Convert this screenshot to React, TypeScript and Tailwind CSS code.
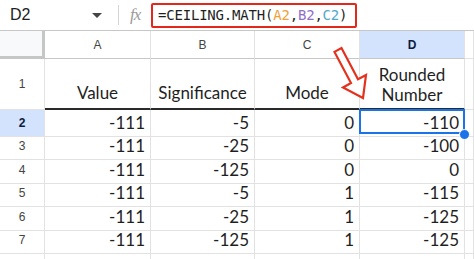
import React from "react";

const cols = ["A", "B", "C", "D"];

const rows = [
  ["-111", "-5", "0", "-110"],
  ["-111", "-25", "0", "-100"],
  ["-111", "-125", "0", "0"],
  ["-111", "-5", "1", "-115"],
  ["-111", "-25", "1", "-125"],
  ["-111", "-125", "1", "-125"],
];

const rowHeights = ["h-[23px]", "h-[24px]", "h-[23px]", "h-[24px]", "h-[23px]", "h-[24px]"];

const grid = "grid grid-cols-[45px_106px_104px_105px_105px_1fr]";
const cell = "border-r border-b border-[#e2e2e2]";

const Arrow = () => (
  <svg className="absolute left-0 top-0 pointer-events-none" width="474" height="259">
    <polygon
      points="341.5,48.1 358,79.2 366,75 363,98 343,87.5 351,83 334.5,51.9"
      fill="white"
      stroke="#e3321f"
      strokeWidth="2.2"
      strokeLinejoin="miter"
    />
  </svg>
);

export default function App() {
  return (
    <div className="relative w-[474px] h-[259px] overflow-hidden bg-white font-['Lato',sans-serif] text-[#1f1f1f]">
      {/* formula bar */}
      <div className="flex items-center h-[31px] border-b border-[#c7c7c7]">
        <div className="w-[90px] pl-[10px] text-[16px] font-['Liberation_Sans',sans-serif] text-[#202124]">D2</div>
        <div className="w-0 h-0 border-l-[5px] border-r-[5px] border-t-[5px] border-l-transparent border-r-transparent border-t-[#444] ml-[2px]" />
        <div className="w-px h-[20px] bg-[#d5d5d5] ml-[16px]" />
        <div className="ml-[11px] w-[18px] text-[17px] italic font-['Liberation_Serif',serif] text-[#9a9a9a] tracking-[-1px]">fx</div>
        <div className="ml-[3px] h-[25px] w-[206px] border-2 border-[#e3271b] rounded-[2px] flex items-center pl-[5px] text-[14px] tracking-[-0.2px] font-['DejaVu_Sans_Mono',monospace] text-[#1f1f1f]">
          =CEILING.MATH(<span className="text-[#f0a13a]">A2</span>,<span className="text-[#9170c9]">B2</span>,<span className="text-[#53a8c9]">C2</span>)
        </div>
      </div>

      {/* column headers */}
      <div className={`${grid} h-[28px] text-[12px] font-['Liberation_Sans',sans-serif] text-[#444]`}>
        <div className="bg-[#f8f9fa] border-r-[3px] border-b-[3px] border-[#c4c7c5]" />
        {cols.map((c) => (
          <div
            key={c}
            className={`flex items-center justify-center ${cell} border-b-[#c7c7c7] ${
              c === "D" ? "bg-[#d3e3fd] font-bold text-[#0b1b3f]" : ""
            }`}
          >
            {c}
          </div>
        ))}
        <div className={cell} />
      </div>

      {/* row 1 */}
      <div className={`${grid} h-[51px] text-[17px]`}>
        <div className={`flex items-center justify-center text-[12px] font-['Liberation_Sans',sans-serif] text-[#444] ${cell}`}>1</div>
        <div className="flex items-end justify-center pb-[3px] border-r border-[#e2e2e2] border-b-2 border-b-[#2a2a2a]">Value</div>
        <div className="flex items-end justify-center pb-[3px] border-r border-[#e2e2e2] border-b-2 border-b-[#2a2a2a]">Significance</div>
        <div className="flex items-end justify-center pb-[3px] border-r border-[#e2e2e2] border-b-2 border-b-[#2a2a2a]">Mode</div>
        <div className="flex items-end justify-center text-center leading-[20px] pb-[3px] border-r border-[#e2e2e2] border-b-2 border-b-[#2a2a2a]">
          Rounded
          <br />
          Number
        </div>
        <div className={cell} />
      </div>

      {/* data rows */}
      {rows.map((r, i) => (
        <div key={i} className={`${grid} ${rowHeights[i]} text-[17px]`}>
          <div
            className={`flex items-center justify-center text-[12px] font-['Liberation_Sans',sans-serif] ${cell} ${
              i === 0 ? "bg-[#d3e3fd] font-bold text-[#0b1b3f]" : "text-[#444]"
            }`}
          >
            {i + 2}
          </div>
          {r.map((v, j) => (
            <div key={j} className={`flex items-center justify-end pr-[5px] ${cell}`}>
              {v}
            </div>
          ))}
          <div className={cell} />
        </div>
      ))}
      <div className={`${grid} h-[10px]`}>
        <div className={cell} />
        <div className={cell} />
        <div className={cell} />
        <div className={cell} />
        <div className={cell} />
        <div className={cell} />
      </div>

      {/* selection on D2 */}
      <div className="absolute left-[359px] top-[109px] w-[106px] h-[25px] border-2 border-[#1a73e8] pointer-events-none" />
      <div className="absolute left-[459px] top-[129px] w-[11px] h-[11px] rounded-full bg-[#1a73e8] border border-white" />

      <Arrow />
    </div>
  );
}
